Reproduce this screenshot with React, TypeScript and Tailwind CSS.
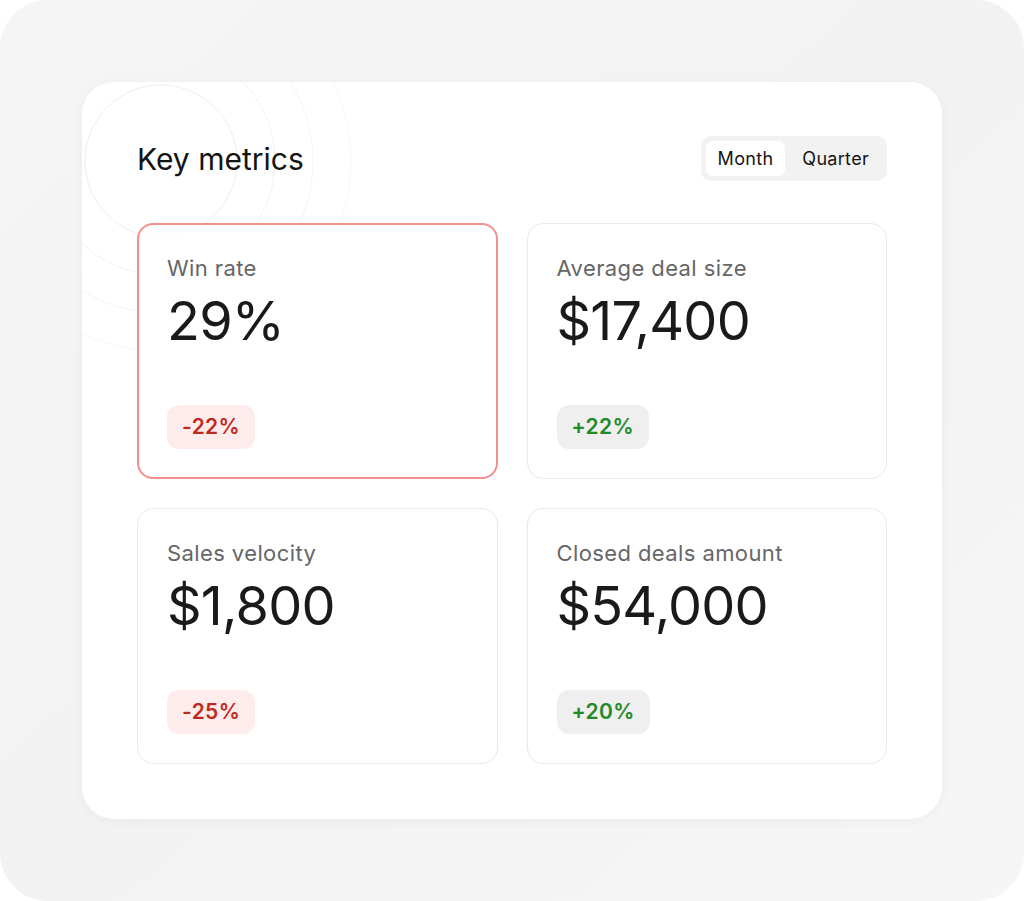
import React from "react";

type Metric = { label: string; value: string; delta: string; up: boolean; active?: boolean };

const metrics: Metric[] = [
  { label: "Win rate", value: "29%", delta: "-22%", up: false, active: true },
  { label: "Average deal size", value: "$17,400", delta: "+22%", up: true },
  { label: "Sales velocity", value: "$1,800", delta: "-25%", up: false },
  { label: "Closed deals amount", value: "$54,000", delta: "+20%", up: true },
];

function Card({ m }: { m: Metric }) {
  return (
    <div
      className={
        "relative flex h-[256px] flex-col justify-between rounded-[16px] bg-white/85 " +
        (m.active ? "border-2 border-[#f58e8c] px-[28px] pt-[28px] pb-[28px]" : "border border-[#e9e9e9] px-[29px] pt-[29px] pb-[29px]")
      }
    >
      <div className="flex flex-col">
        <div className="text-[22px] leading-[30px] tracking-[0.4px] text-[#666666]">{m.label}</div>
        <div className="mt-[9px] text-[54px] leading-[58px] tracking-[-0.8px] text-[#1a1a1a]">{m.value}</div>
      </div>
      <div>
        <span
          className={
            "inline-flex h-[44px] items-center rounded-[12px] px-[15px] text-[21px] font-semibold tracking-[0.4px] " +
            (m.up ? "bg-[#eeefee] text-[#1f8a2a]" : "bg-[#fdeceb] text-[#c02a1d]")
          }
        >
          {m.delta}
        </span>
      </div>
    </div>
  );
}

export default function App() {
  return (
    <div className="h-[901px] w-[1024px] bg-white" style={{ fontFamily: "Inter, 'Noto Sans', sans-serif" }}>
      <div className="flex h-full w-full items-start rounded-[48px] bg-gradient-to-br from-[#f5f5f5] via-[#f2f2f2] to-[#f6f6f6] p-[82px] pb-0">
        <div className="relative h-[737px] w-[860px] overflow-hidden rounded-[32px] bg-white px-[55px] pt-[54px] shadow-[0_2px_12px_rgba(0,0,0,0.04)]">
          <svg className="absolute left-0 top-0" width="320" height="320" viewBox="0 0 320 320" fill="none">
            <circle cx="79" cy="79" r="76" stroke="#ededed" strokeWidth="1" />
            <circle cx="79" cy="79" r="114" stroke="#f2f2f2" strokeWidth="1" />
            <circle cx="79" cy="79" r="152" stroke="#f4f4f4" strokeWidth="1" />
            <circle cx="79" cy="79" r="190" stroke="#f7f7f7" strokeWidth="1" />
          </svg>
          <div className="relative flex h-[45px] items-center justify-between">
            <h1 className="text-[30px] font-normal leading-none text-[#141414]">Key metrics</h1>
            <div className="flex h-[45px] items-center rounded-[10px] bg-[#f2f2f2] p-[5px]">
              <button className="h-[35px] rounded-[7px] bg-white px-[12px] text-[18px] tracking-[0.3px] text-[#141414]">Month</button>
              <button className="h-[35px] rounded-[7px] pl-[17px] pr-[13px] text-[18px] tracking-[0.3px] text-[#141414]">Quarter</button>
            </div>
          </div>
          <div className="relative mt-[42px] grid grid-cols-2 gap-[29px]">
            {metrics.map((m) => (
              <Card key={m.label} m={m} />
            ))}
          </div>
        </div>
      </div>
    </div>
  );
}
